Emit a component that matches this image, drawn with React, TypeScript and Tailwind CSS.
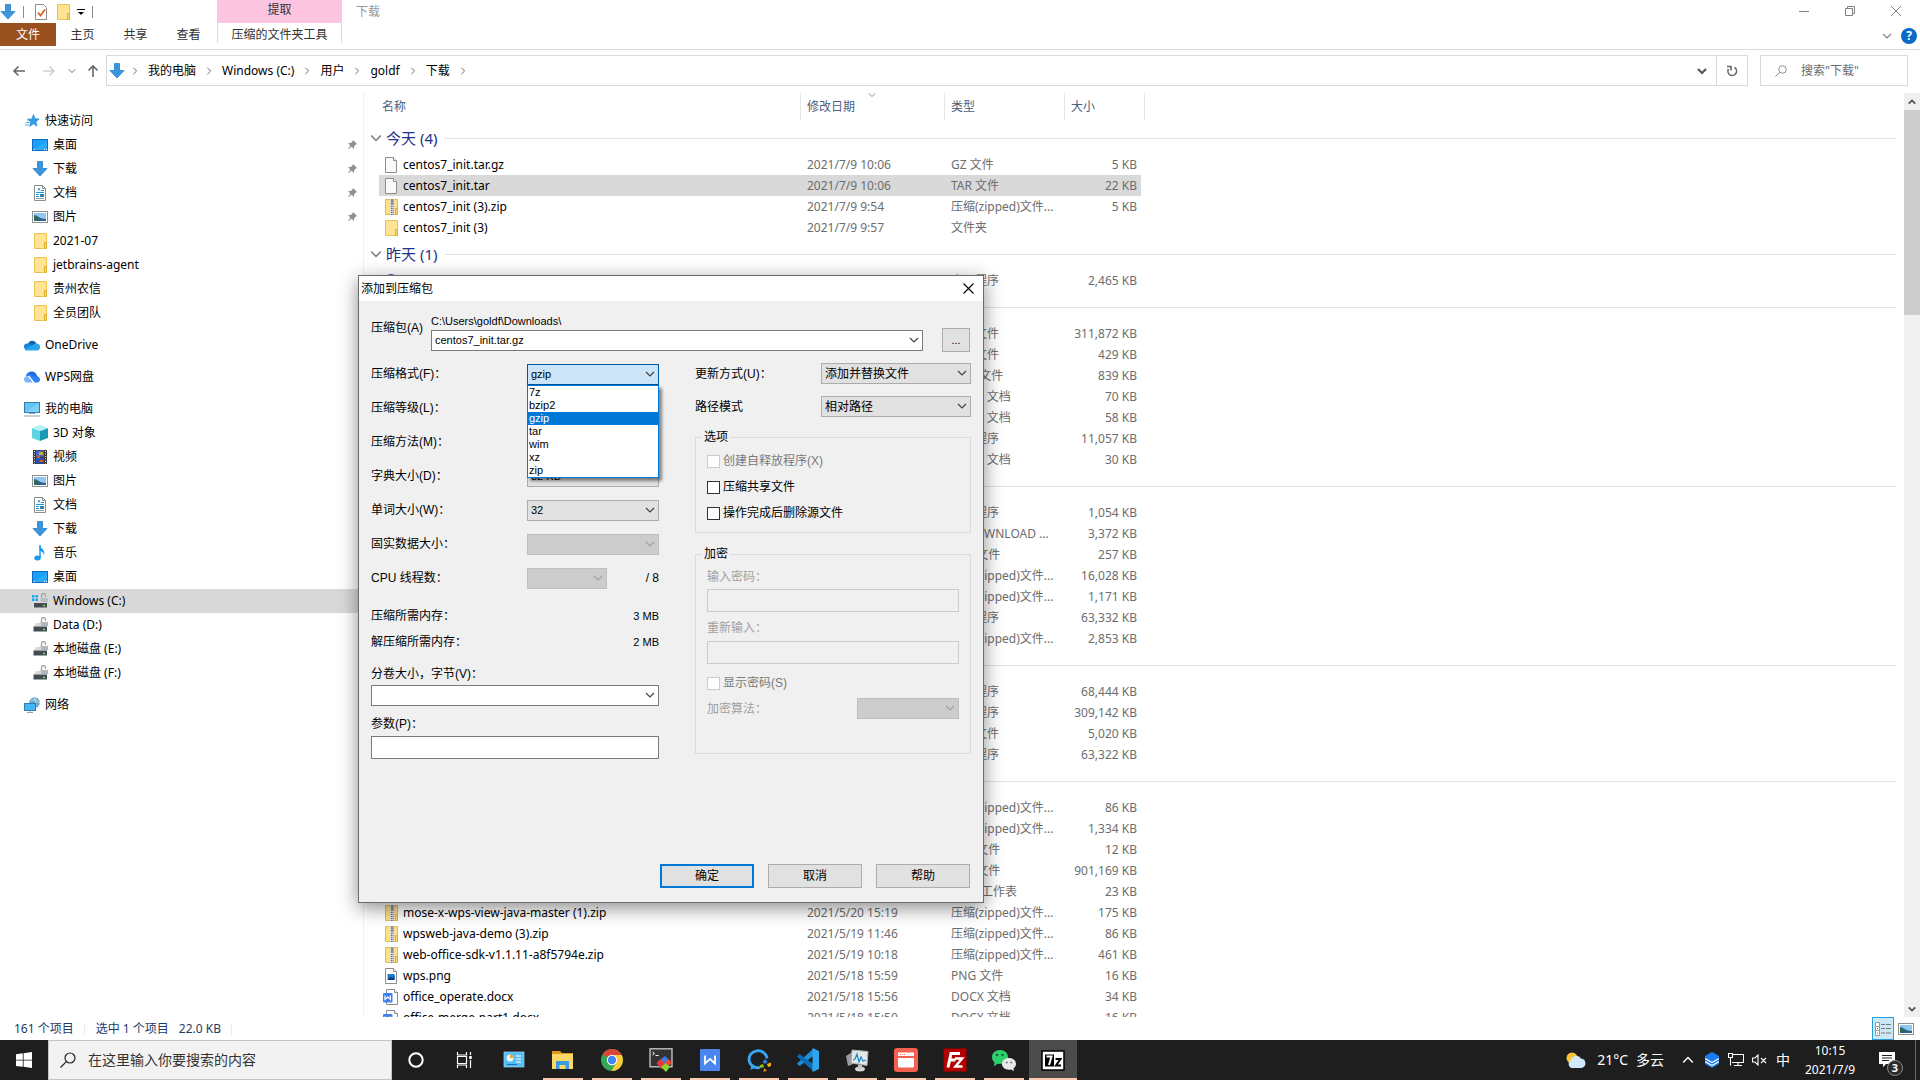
import type { ReactNode } from "react";
import clsx from "clsx";

// ---------- data ----------

type IconName =
  | "star" | "desktop" | "download" | "document" | "picture" | "folder"
  | "onedrive" | "wps" | "computer" | "cube" | "video" | "music"
  | "driveC" | "drive" | "network" | "file" | "zip" | "png" | "docx" | "exe";

type NavItem = { icon: IconName; label: string; pinned?: boolean; active?: boolean };
type NavGroup = { root?: NavItem; items: NavItem[] };

const navGroups: NavGroup[] = [
  {
    root: { icon: "star", label: "快速访问" },
    items: [
      { icon: "desktop", label: "桌面", pinned: true },
      { icon: "download", label: "下载", pinned: true },
      { icon: "document", label: "文档", pinned: true },
      { icon: "picture", label: "图片", pinned: true },
      { icon: "folder", label: "2021-07" },
      { icon: "folder", label: "jetbrains-agent" },
      { icon: "folder", label: "贵州农信" },
      { icon: "folder", label: "全员团队" },
    ],
  },
  { root: { icon: "onedrive", label: "OneDrive" }, items: [] },
  { root: { icon: "wps", label: "WPS网盘" }, items: [] },
  {
    root: { icon: "computer", label: "我的电脑" },
    items: [
      { icon: "cube", label: "3D 对象" },
      { icon: "video", label: "视频" },
      { icon: "picture", label: "图片" },
      { icon: "document", label: "文档" },
      { icon: "download", label: "下载" },
      { icon: "music", label: "音乐" },
      { icon: "desktop", label: "桌面" },
      { icon: "driveC", label: "Windows (C:)", active: true },
      { icon: "drive", label: "Data (D:)" },
      { icon: "drive", label: "本地磁盘 (E:)" },
      { icon: "drive", label: "本地磁盘 (F:)" },
    ],
  },
  { root: { icon: "network", label: "网络" }, items: [] },
];

type FileRow = {
  icon: IconName;
  name: string;
  date: string;
  type: string;
  size: string;
  selected?: boolean;
};

const ZIP = "压缩(zipped)文件...";

const fileGroups: { title: string; rows: FileRow[] }[] = [
  {
    title: "今天 (4)",
    rows: [
      { icon: "file", name: "centos7_init.tar.gz", date: "2021/7/9 10:06", type: "GZ 文件", size: "5 KB" },
      { icon: "file", name: "centos7_init.tar", date: "2021/7/9 10:06", type: "TAR 文件", size: "22 KB", selected: true },
      { icon: "zip", name: "centos7_init (3).zip", date: "2021/7/9 9:54", type: ZIP, size: "5 KB" },
      { icon: "folder", name: "centos7_init (3)", date: "2021/7/9 9:57", type: "文件夹", size: "" },
    ],
  },
  {
    title: "昨天 (1)",
    rows: [{ icon: "exe", name: "commons_from.exe", date: "2021/7/8", type: "应用程序", size: "2,465 KB" }],
  },
  {
    title: "本周 (7)",
    rows: [
      { icon: "file", name: "", date: "", type: "TAR 文件", size: "311,872 KB" },
      { icon: "file", name: "", date: "", type: "TAR 文件", size: "429 KB" },
      { icon: "png", name: "", date: "", type: "PNG 文件", size: "839 KB" },
      { icon: "docx", name: "", date: "", type: "DOCX 文档", size: "70 KB" },
      { icon: "docx", name: "", date: "", type: "DOCX 文档", size: "58 KB" },
      { icon: "exe", name: "", date: "", type: "应用程序", size: "11,057 KB" },
      { icon: "docx", name: "", date: "", type: "DOCX 文档", size: "30 KB" },
    ],
  },
  {
    title: "上周 (7)",
    rows: [
      { icon: "exe", name: "", date: "", type: "应用程序", size: "1,054 KB" },
      { icon: "file", name: "", date: "", type: "CRDOWNLOAD ...", size: "3,372 KB" },
      { icon: "file", name: "", date: "", type: "PDF 文件", size: "257 KB" },
      { icon: "zip", name: "", date: "", type: ZIP, size: "16,028 KB" },
      { icon: "zip", name: "", date: "", type: ZIP, size: "1,171 KB" },
      { icon: "exe", name: "", date: "", type: "应用程序", size: "63,332 KB" },
      { icon: "zip", name: "", date: "", type: ZIP, size: "2,853 KB" },
    ],
  },
  {
    title: "上月 (4)",
    rows: [
      { icon: "exe", name: "", date: "", type: "应用程序", size: "68,444 KB" },
      { icon: "exe", name: "", date: "", type: "应用程序", size: "309,142 KB" },
      { icon: "file", name: "", date: "", type: "TAR 文件", size: "5,020 KB" },
      { icon: "exe", name: "", date: "", type: "应用程序", size: "63,322 KB" },
    ],
  },
  {
    title: "今年早些时候",
    rows: [
      { icon: "zip", name: "", date: "", type: ZIP, size: "86 KB" },
      { icon: "zip", name: "", date: "", type: ZIP, size: "1,334 KB" },
      { icon: "file", name: "", date: "", type: "PDF 文件", size: "12 KB" },
      { icon: "file", name: "", date: "", type: "PDF 文件", size: "901,169 KB" },
      { icon: "file", name: "", date: "", type: "XLSX 工作表", size: "23 KB" },
      { icon: "zip", name: "mose-x-wps-view-java-master (1).zip", date: "2021/5/20 15:19", type: ZIP, size: "175 KB" },
      { icon: "zip", name: "wpsweb-java-demo (3).zip", date: "2021/5/19 11:46", type: ZIP, size: "86 KB" },
      { icon: "zip", name: "web-office-sdk-v1.1.11-a8f5794e.zip", date: "2021/5/19 10:18", type: ZIP, size: "461 KB" },
      { icon: "png", name: "wps.png", date: "2021/5/18 15:59", type: "PNG 文件", size: "16 KB" },
      { icon: "docx", name: "office_operate.docx", date: "2021/5/18 15:56", type: "DOCX 文档", size: "34 KB" },
      { icon: "docx", name: "office-merge-part1.docx", date: "2021/5/18 15:50", type: "DOCX 文档", size: "16 KB" },
    ],
  },
];

const formats = ["7z", "bzip2", "gzip", "tar", "wim", "xz", "zip"];

// ---------- icons ----------

const glyphs: Record<IconName, ReactNode> = {
  star: (
    <>
      <path d="M9.500 1.500l1.500 4.300 4.200.2-3.300 2.800 1.100 4.400-3.500-2.400-3.800 2.600 1.100-4.500L3.500 6.200l4.300-.3z" fill="#2f9fe8" stroke="#1a7fc9" strokeWidth=".6" />
      <path d="M1.500 9.500h4M1 12h4M3 7h2" stroke="#4db0f0" />
    </>
  ),
  desktop: (
    <>
      <rect x=".5" y="2.500" width="15" height="11" fill="#1aa0fb" stroke="#0b6fc0" />
      <path d="M1 13L15 4v9z" fill="#38b0ff" opacity=".6" />
      <path d="M2 12.500h1m9 0h1m1 0h1" stroke="#fff" />
    </>
  ),
  download: <path d="M5.500.5h5v7h4.500L8 15 1 7.500h4.500z" fill="#3a96dd" stroke="#2a7fc6" strokeWidth=".8" />,
  document: (
    <>
      <path d="M2.500.5h8l3 3v12h-11z" fill="#fff" stroke="#8c8c8c" />
      <path d="M10.500.5v3h3" fill="none" stroke="#8c8c8c" />
      <path d="M6 5.500l1-2.500 1 2.500M9 5.500h3M4 7.500h8M4 9.500h3M4 11.500h3" fill="none" stroke="#1d9ad6" />
      <path d="M8 9h4v3H8z" fill="#3c7fa8" />
      <path d="M4 13.500h8" stroke="#9a9a9a" />
    </>
  ),
  picture: (
    <>
      <rect x=".5" y="2.500" width="15" height="11" fill="#fff" stroke="#8f8f8f" />
      <path d="M2 4h12v8H2z" fill="#8fc7f3" />
      <path d="M2 6c3 0 5 3 8 3.500s3 .5 4 .5v2H2z" fill="#31618a" />
      <path d="M2 7c2 .5 4 2.500 6 3.500l-6 .5z" fill="#2f6a4d" />
    </>
  ),
  folder: (
    <>
      <path d="M2.500.5h12v15h-12z" fill="#ffe494" stroke="#e8c252" />
      <path d="M12.500 9.500h2v6h-2z" fill="#ffd768" stroke="#e0b030" />
    </>
  ),
  onedrive: (
    <>
      <path d="M4 7a4.500 4.500 0 018.500-.5L8 11 2 10z" fill="#0f62b8" />
      <path d="M3.500 6.500C6 6 8 8 10 9l-7 4a3.200 3.200 0 01.5-6.500z" fill="#1582dc" />
      <path d="M12.500 6.500a3.500 3.500 0 010 7H3c-1 0-2-.5-2.500-1.300L9 8c1-1 2-1.500 3.500-1.500z" fill="#28a8ea" />
    </>
  ),
  wps: (
    <>
      <path d="M2 7C2.500 3.500 7.500.5 11.500 4L14 8l-4 1-3-2.500z" fill="#1f6fe8" />
      <path d="M0 10c0-2 2-3.500 4-3l5 6.500H3C1 13.500 0 12 0 10z" fill="#7fb4ff" />
      <path d="M5 6.500c2-1 4 0 5.500 1.500 3-1.500 5.500 0 5.500 2.500 0 2-1 3-3 3h-2.500z" fill="#2f80f5" />
      <path d="M4.500 7l5.500 6.500" stroke="#fff" strokeWidth=".8" />
    </>
  ),
  computer: (
    <>
      <rect x=".5" y="1.500" width="15" height="10" fill="#62c3f8" stroke="#3a7ca5" />
      <path d="M1 11L15 2v9z" fill="#8ad6ff" opacity=".7" />
      <path d="M5 12.500h6M0 15h16" stroke="#8ea3b3" />
    </>
  ),
  cube: (
    <>
      <path d="M0 3l8 3v10l-8-3z" fill="#5fd3e0" />
      <path d="M16 3L8 6v10l8-3z" fill="#1899b5" />
      <path d="M0 3l8-3 8 3-8 3z" fill="#b4f0f2" />
    </>
  ),
  video: (
    <>
      <path d="M1 1h14v14H1z" fill="#3d3a3a" />
      <path d="M4 1.500h8v6H4z" fill="#4069c9" />
      <path d="M4 8.500h8v6H4z" fill="#2c51b4" />
      <path d="M7 3h4v3H7z" fill="#c9a93b" />
      <path d="M5 6h3v3H5zM8 11h3v2H8z" fill="#cc5b2e" />
      <path d="M2.500 2v13M13.500 2v13" stroke="#e8e8e8" strokeDasharray="1 1.500" />
    </>
  ),
  music: (
    <>
      <path d="M7.500 0c.5 3 6.500 5 4.500 10.500-.2-2.500-1.500-4-4-4.500z" fill="#0f9bf0" />
      <path d="M8 0v13" stroke="#0f9bf0" strokeWidth="1.500" />
      <ellipse cx="5.500" cy="13" rx="3.200" ry="2.500" fill="#0f9bf0" />
    </>
  ),
  driveC: (
    <>
      <path d="M0 2h2.500v2.500H0zM3.500 2H6v2.500H3.500zM0 5.500h2.500V8H0zM3.500 5.500H6V8H3.500z" fill="#15aaf0" />
      <path d="M9.500 5V2.500a2 2 0 014 0V4" fill="none" stroke="#9fa6ab" strokeWidth="1.300" />
      <path d="M8.500 5H16v4H8.500z" fill="#b9c0c5" />
      <path d="M2 10h13v4.500H2z" fill="#454b50" />
      <path d="M11 12.500h2" stroke="#5ef04e" strokeWidth="1.500" />
    </>
  ),
  drive: (
    <>
      <path d="M9.500 5V2.500a2 2 0 014 0V4" fill="none" stroke="#9fa6ab" strokeWidth="1.300" />
      <path d="M8.500 5H16v4H8.500z" fill="#aeb6bc" />
      <path d="M4 6h5l1 3.500H2z" fill="#d3d7da" />
      <path d="M1.500 9.500H15v5H1.500z" fill="#454b50" />
      <path d="M11 12.500h2" stroke="#5ef04e" strokeWidth="1.500" />
    </>
  ),
  network: (
    <>
      <circle cx="10.500" cy="5.500" r="5.300" fill="#6aa9c9" />
      <path d="M7 3c2 1 3-1 5 0s2 3 3.500 3M10 .5c1 3 3 6 1 10" fill="none" stroke="#c5e4f2" />
      <rect x=".5" y="6.500" width="11" height="7" fill="#46b4f5" stroke="#2c7cb0" />
      <path d="M3 15.500h6M6 13.500v2" stroke="#8ea3b3" />
    </>
  ),
  file: (
    <>
      <path d="M2.500.5h8l3 3v12h-11z" fill="#f9f9f9" stroke="#8c8c8c" />
      <path d="M10.500.5v3h3" fill="#fff" stroke="#8c8c8c" />
    </>
  ),
  zip: (
    <>
      <path d="M2.500.5h12v15h-12z" fill="#ffe27f" stroke="#e3bb45" />
      <path d="M12.500 9.500h2v6h-2z" fill="#ffd768" stroke="#e0b030" />
      <path d="M7 0h4.500v16H7z" fill="#d8d8d8" />
      <path d="M8.500 7v9M10 7v9" stroke="#6c6c6c" strokeDasharray="1 1" />
      <path d="M8 0h2.500v6H8z" fill="#8f8f8f" />
    </>
  ),
  png: (
    <>
      <path d="M2.500.5h8l3 3v12h-11z" fill="#fff" stroke="#8c8c8c" />
      <path d="M10.500.5v3h3" fill="#fff" stroke="#8c8c8c" />
      <path d="M4.500 6h7v6h-7z" fill="#1a7fd0" />
      <path d="M4.500 12l3-3.500 2 1.500 2-3v5z" fill="#0d3e7d" />
    </>
  ),
  docx: (
    <>
      <path d="M3.500.5h8l3 3v12h-11z" fill="#fff" stroke="#8c8c8c" />
      <path d="M11.500.5v3h3" fill="#fff" stroke="#8c8c8c" />
      <rect x="0" y="4" width="9.500" height="9.500" rx="1" fill="#3f7fee" />
      <path d="M2 6.500v4l2.700-2.500 2.700 2.500v-4" fill="none" stroke="#fff" strokeWidth="1.200" />
    </>
  ),
  exe: <circle cx="8" cy="8" r="7" fill="#5b4fb5" />,
};

function Icon({ name, className }: { name: IconName; className?: string }) {
  return (
    <svg viewBox="0 0 16 16" className={clsx("size-4 shrink-0", className)} aria-hidden="true">
      {glyphs[name]}
    </svg>
  );
}

function Chevron({ dir = "down", bold, className }: { dir?: "down" | "right" | "up"; bold?: boolean; className?: string }) {
  const paths = { down: "M1 3l4 4 4-4", right: "M3 1l4 4-4 4", up: "M1 7l4-4 4 4" };
  return (
    <svg viewBox="0 0 10 10" className={clsx("shrink-0", className)} aria-hidden="true">
      <path d={paths[dir]} fill="none" stroke="currentColor" strokeWidth={bold ? 2.2 : 1.2} />
    </svg>
  );
}

function SearchGlyph({ className }: { className?: string }) {
  return (
    <svg viewBox="0 0 16 16" className={clsx("shrink-0", className)} aria-hidden="true">
      <circle cx="10" cy="6" r="5" fill="none" stroke="currentColor" strokeWidth="1.200" />
      <path d="M6.300 9.700L.5 15.500" stroke="currentColor" strokeWidth="1.200" />
    </svg>
  );
}

function Pin() {
  return (
    <svg viewBox="0 0 12 12" className="ml-auto mr-[5px] size-3" aria-hidden="true">
      <path d="M7 1l4 4-1.200.5L8 7.500 8 10 5.500 7.700 1.500 11 4.300 6.500 2 4l2.800-.1L6.700 2z" fill="#87929b" />
    </svg>
  );
}

// ---------- explorer ----------

function Ribbon() {
  return (
    <header className="flex h-[50px] shrink-0 border-b border-[#dadbdc]">
      <div className="w-[217px]">
        <div className="flex h-[23px] items-center">
          <Icon name="download" />
          <span className="ml-[7px] h-3 w-px bg-[#8a8a8a]" />
          <svg viewBox="0 0 16 16" className="ml-[9px] size-4" aria-hidden="true">
            <path d="M2.500.5h8l3 3v12h-11z" fill="#fff" stroke="#8c8c8c" />
            <path d="M5 8.500l2.500 3L12 5.500" fill="none" stroke="#e0602a" strokeWidth="1.800" />
          </svg>
          <Icon name="folder" className="ml-[6px]" />
          <svg viewBox="0 0 8 8" className="ml-[6px] size-2" aria-hidden="true">
            <path d="M0 1.500h8" stroke="#000" />
            <path d="M1 4h6L4 7z" />
          </svg>
          <span className="ml-[7px] h-3 w-px bg-[#8a8a8a]" />
        </div>
        <nav className="flex h-[23px] leading-6 text-[#333]">
          <button className="w-14 bg-[#99511f] text-white">文件</button>
          <button className="w-[53px]">主页</button>
          <button className="w-[53px]">共享</button>
          <button className="w-[53px]">查看</button>
        </nav>
      </div>
      <div className="w-[125px] text-center text-[#333]">
        <div className="h-[23px] bg-[#fdc4df] leading-[19px]">提取</div>
        <button className="h-5 w-full border-x border-[#dadbdc] leading-6">压缩的文件夹工具</button>
      </div>
      <h1 className="ml-[14px] leading-[23px] text-[#999]">下载</h1>
      <div className="ml-auto text-[#808080]">
        <div className="flex h-[21px] items-center pr-px">
          <button aria-label="最小化" className="flex w-[46px] justify-center">
            <svg viewBox="0 0 10 10" className="size-[10px]"><path d="M0 5.500h10" stroke="currentColor" /></svg>
          </button>
          <button aria-label="还原" className="flex w-[46px] justify-center">
            <svg viewBox="0 0 10 10" className="size-[10px]" fill="none" stroke="currentColor">
              <path d="M.5 2.500h7v7h-7zM2.500 2.500v-2h7v7h-2" />
            </svg>
          </button>
          <button aria-label="关闭" className="flex w-[46px] justify-center">
            <svg viewBox="0 0 10 10" className="size-[10px]"><path d="M0 0l10 10M10 0L0 10" stroke="currentColor" /></svg>
          </button>
        </div>
        <div className="flex h-[29px] items-center justify-end gap-[9px] pr-[3px]">
          <Chevron className="size-[10px]" />
          <button aria-label="帮助" className="size-4 rounded-full bg-[#0a6ac8] text-center font-bold leading-4 text-white">?</button>
        </div>
      </div>
    </header>
  );
}

function AddressBar() {
  const crumbs = ["我的电脑", "Windows (C:)", "用户", "goldf", "下载"];
  return (
    <div className="flex h-[43px] shrink-0 items-start pr-3 pt-[5px]">
      <div className="flex h-[31px] w-[106px] items-center pl-3 text-[#666]">
        <button aria-label="后退">
          <svg viewBox="0 0 14 12" className="h-3 w-[14px]" fill="none" stroke="currentColor" strokeWidth="1.600"><path d="M13 6H2M6.500 1.500L2 6l4.500 4.500" /></svg>
        </button>
        <button aria-label="前进" className="ml-4 text-[#d0d0d0]">
          <svg viewBox="0 0 14 12" className="h-3 w-[14px]" fill="none" stroke="currentColor" strokeWidth="1.600"><path d="M1 6h11M7.500 1.500L12 6l-4.500 4.500" /></svg>
        </button>
        <button aria-label="最近位置" className="ml-3"><Chevron className="size-2" /></button>
        <button aria-label="上移" className="ml-[11px]">
          <svg viewBox="0 0 12 14" className="h-[14px] w-3" fill="none" stroke="currentColor" strokeWidth="1.600"><path d="M6 13V2M1.500 6.500L6 2l4.500 4.500" /></svg>
        </button>
      </div>
      <div className="flex h-[31px] flex-1 items-center border border-[#d9d9d9] pl-[2px] text-black">
        <Icon name="download" />
        <Chevron dir="right" className="ml-[6px] size-2 text-[#666]" />
        {crumbs.map((c) => (
          <span key={c} className="flex items-center leading-[27px]">
            <a href="#" className="mx-[9px]">{c}</a>
            <Chevron dir="right" className="size-2 text-[#666]" />
          </span>
        ))}
        <button aria-label="展开" className="ml-auto mr-[9px] text-[#555]"><Chevron bold className="size-[10px]" /></button>
        <button aria-label="刷新" className="flex h-full w-[31px] items-center justify-center border-l border-[#d9d9d9] text-[#666]">
          <svg viewBox="0 0 12 12" className="size-3" fill="none" stroke="currentColor" strokeWidth="1.600"><path d="M8.500 2.500A4.300 4.300 0 112.500 4M1 1.500h4v4" /></svg>
        </button>
      </div>
      <label className="ml-3 flex h-[31px] w-[148px] items-center border border-[#d9d9d9] pl-[14px] text-[#808080]">
        <SearchGlyph className="size-3" />
        <input className="ml-[14px] w-[90px] bg-transparent outline-none placeholder:text-[#6d6d6d]" placeholder={'搜索"下载"'} aria-label="搜索" />
      </label>
    </div>
  );
}

function Sidebar() {
  return (
    <aside className="w-[364px] shrink-0 border-r border-[#f0f0f0] pt-4 text-black">
      {navGroups.map((g, i) => (
        <ul key={i} className="mb-2">
          {g.root && (
            <li className="flex h-6 items-center gap-[5px] pl-6">
              <Icon name={g.root.icon} />
              <a href="#">{g.root.label}</a>
            </li>
          )}
          {g.items.map((item, k) => (
            <li key={k} className={clsx("flex h-6 items-center gap-[5px] pl-8", item.active && "bg-[#d9d9d9]")}>
              <Icon name={item.icon} />
              <a href="#">{item.label}</a>
              {item.pinned && <Pin />}
            </li>
          ))}
        </ul>
      ))}
    </aside>
  );
}

function FileTable() {
  return (
    <div className="min-w-0 flex-1 overflow-hidden">
      <table className="w-full table-fixed border-collapse text-left text-[#6d6d6d]">
        <colgroup>
          <col className="w-[15px]" />
          <col className="w-[422px]" />
          <col className="w-36" />
          <col className="w-[120px]" />
          <col className="w-[76px]" />
          <col />
        </colgroup>
        <thead className="text-[#4c607a]">
          <tr className="h-[29px] align-top">
            <td />
            <th className="p-0 font-normal">
              <div className="h-[27px] border-r border-[#e5e5e5] pl-[3px] leading-7">名称</div>
            </th>
            <th className="relative p-0 font-normal">
              <Chevron className="absolute left-[67px] top-[-2px] size-2 text-[#8a8a8a]" />
              <div className="h-[27px] border-r border-[#e5e5e5] pl-[6px] leading-7">修改日期</div>
            </th>
            <th className="p-0 font-normal">
              <div className="h-[27px] border-r border-[#e5e5e5] pl-[6px] leading-7">类型</div>
            </th>
            <th className="p-0 font-normal">
              <div className="h-[27px] pl-[6px] leading-7">大小</div>
            </th>
            <td className="p-0 pl-[3px]">
              <div className="h-[27px] border-l border-[#e5e5e5]" />
            </td>
          </tr>
        </thead>
        {fileGroups.map((g) => (
          <tbody key={g.title}>
            <tr>
              <th colSpan={6} className="p-0 font-normal">
                <div className="flex h-8 items-center pl-[6px] pr-2 text-[15px] text-[#1e3287]">
                  <Chevron className="size-3 text-[#777]" />
                  <span className="ml-1 leading-5">{g.title}</span>
                  <span className="ml-2 mt-px h-px flex-1 bg-[#e2e2e2]" />
                </div>
              </th>
            </tr>
            {g.rows.map((r, i) => {
              const cell = clsx("h-[21px] p-0 whitespace-nowrap leading-[21px]", r.selected && "bg-[#d9d9d9]");
              return (
                <tr key={i}>
                  <td />
                  <td className={cell}>
                    <div className="flex h-[21px] items-center gap-1 pl-1 text-black">
                      <Icon name={r.icon} />
                      {r.name}
                    </div>
                  </td>
                  <td className={cell}><div className="pl-[6px]">{r.date}</div></td>
                  <td className={cell}><div className="pl-[6px]">{r.type}</div></td>
                  <td className={cell}><div className="pr-1 text-right">{r.size}</div></td>
                  <td />
                </tr>
              );
            })}
          </tbody>
        ))}
      </table>
    </div>
  );
}

function ScrollBar() {
  return (
    <div className="flex w-4 shrink-0 flex-col bg-[#f0f0f0] text-[#505050]">
      <button aria-label="向上滚动" className="flex h-[17px] items-center justify-center"><Chevron dir="up" bold className="size-2" /></button>
      <div className="h-[205px] bg-[#cdcdcd]" />
      <button aria-label="向下滚动" className="mt-auto flex h-[17px] items-center justify-center"><Chevron bold className="size-2" /></button>
    </div>
  );
}

function StatusBar() {
  return (
    <footer className="flex h-[23px] shrink-0 items-center pl-[14px] pr-[6px] text-[#1e3a66]">
      <span>161 个项目</span>
      <span className="ml-[10px] h-3 w-px bg-[#ececec]" />
      <span className="ml-[11px]">选中 1 个项目</span>
      <span className="ml-[10px]">22.0 KB</span>
      <span className="ml-[10px] h-3 w-px bg-[#ececec]" />
      <button aria-label="详细信息" className="ml-auto flex h-[23px] w-[22px] items-center justify-center border border-[#26a0da] bg-[#cce8f6]">
        <svg viewBox="0 0 16 14" className="h-[14px] w-4" fill="none" stroke="#777">
          <path d="M.5.500h4v4h-4zM.5 4.500h4v4h-4zM.5 8.500h4v5h-4z" fill="#fff" stroke="#999" />
          <path d="M6 2.500h4m1 0h5M6 6.500h4m1 0h5M6 11h4m1 0h5" />
          <path d="M2 11h1" stroke="#d33" />
          <path d="M2 6.500h1" stroke="#36c" />
        </svg>
      </button>
      <button aria-label="大图标" className="ml-1"><Icon name="picture" /></button>
    </footer>
  );
}

// ---------- archive dialog ----------

function Select({ id, value, className, tone = "gray", disabled }: {
  id: string;
  value?: string;
  className?: string;
  tone?: "gray" | "white" | "blue";
  disabled?: boolean;
}) {
  return (
    <div className={clsx("relative h-[21px] shrink-0", className)}>
      <select
        id={id}
        disabled={disabled}
        className={clsx(
          "block h-full w-full appearance-none rounded-none border pl-[3px] text-black opacity-100 outline-none",
          disabled && "border-[#bfbfbf] bg-[#cccccc]",
          !disabled && tone === "gray" && "border-[#acacac] bg-[#e1e1e1]",
          !disabled && tone === "white" && "border-[#7a7a7a] bg-white",
          !disabled && tone === "blue" && "border-[#00579c] bg-[#cce4f7]"
        )}
      >
        <option>{value ?? ""}</option>
      </select>
      <Chevron className={clsx("pointer-events-none absolute right-1 top-[5px] size-[10px]", disabled ? "text-[#a0a0a0]" : "text-[#444]")} />
    </div>
  );
}

function Field({ id, label, children }: { id: string; label: string; children: ReactNode }) {
  return (
    <div className="flex h-[34px] items-center">
      <label htmlFor={id} className="w-[156px]">{label}</label>
      {children}
    </div>
  );
}

function Check({ id, label, disabled }: { id: string; label: string; disabled?: boolean }) {
  return (
    <div className={clsx("flex h-[26px] items-center gap-[3px]", disabled && "text-[#7a7a7a]")}>
      <input
        id={id}
        type="checkbox"
        disabled={disabled}
        className={clsx("size-[13px] appearance-none border bg-white", disabled ? "border-[#cccccc]" : "border-[#333]")}
      />
      <label htmlFor={id}>{label}</label>
    </div>
  );
}

function DialogButton({ children, primary }: { children: ReactNode; primary?: boolean }) {
  return (
    <button className={clsx("h-6 w-[94px] bg-[#e1e1e1]", primary ? "border-2 border-[#0078d7]" : "border border-[#adadad]")}>
      {children}
    </button>
  );
}

function ArchiveDialog() {
  return (
    <div
      role="dialog"
      aria-label="添加到压缩包"
      className="absolute left-[358px] top-[275px] flex h-[628px] w-[626px] flex-col border border-[#6b6b6b] bg-[#f0f0f0] font-['Liberation_Sans','Noto_Sans_CJK_SC',sans-serif] text-black shadow-[0_5px_18px_rgba(0,0,0,0.45)]"
    >
      <div className="flex h-[25px] items-center bg-white pl-[2px] pr-[9px]">
        <h2>添加到压缩包</h2>
        <button aria-label="关闭" className="ml-auto">
          <svg viewBox="0 0 11 11" className="size-[11px]"><path d="M.5.500l10 10M10.500.5l-10 10" stroke="#000" strokeWidth="1.100" /></svg>
        </button>
      </div>

      <div className="flex flex-1 flex-col px-3 pb-[14px] pt-[13px]">
        <div className="flex">
          <label htmlFor="archive" className="mt-[5px] w-[60px] leading-[18px]">压缩包(A)</label>
          <div className="w-[492px] text-[11px]">
            <p className="h-4 leading-[14px]">C:\Users\goldf\Downloads\</p>
            <Select id="archive" value="centos7_init.tar.gz" tone="white" />
          </div>
          <button className="ml-auto mr-px mt-[14px] h-6 w-7 border border-[#adadad] bg-[#e1e1e1] text-[11px]">...</button>
        </div>

        <div className="mt-[5px] flex gap-9">
          <div className="w-72">
            <div className="relative">
              <Field id="format" label="压缩格式(F)：">
                <Select id="format" value="gzip" tone="blue" className="w-[132px] text-[11px]" />
              </Field>
              <ul role="listbox" className="absolute left-[156px] top-7 z-10 w-[132px] border border-[#0078d7] bg-white text-[11px] leading-[13px] shadow-[3px_3px_3px_rgba(0,0,0,0.45)]">
                {formats.map((f) => (
                  <li key={f} role="option" aria-selected={f === "gzip"} className={clsx("h-[13px] pl-px", f === "gzip" && "bg-[#0078d7] text-white")}>
                    {f}
                  </li>
                ))}
              </ul>
            </div>
            <Field id="level" label="压缩等级(L)："><Select id="level" className="w-[132px]" /></Field>
            <Field id="method" label="压缩方法(M)："><Select id="method" className="w-[132px]" /></Field>
            <Field id="dict" label="字典大小(D)："><Select id="dict" value="32 KB" className="w-[132px] text-[11px]" /></Field>
            <Field id="word" label="单词大小(W)："><Select id="word" value="32" className="w-[132px] text-[11px]" /></Field>
            <Field id="solid" label="固实数据大小："><Select id="solid" disabled className="w-[132px]" /></Field>
            <Field id="cpu" label="CPU 线程数：">
              <Select id="cpu" disabled className="w-20" />
              <span className="ml-auto">/ 8</span>
            </Field>

            <div className="mt-2 leading-[26px]">
              <p className="flex justify-between"><span>压缩所需内存：</span><span className="text-[11px]">3 MB</span></p>
              <p className="flex justify-between"><span>解压缩所需内存：</span><span className="text-[11px]">2 MB</span></p>
            </div>
            <label htmlFor="volume" className="mt-2 block leading-[22px]">分卷大小，字节(V)：</label>
            <Select id="volume" tone="white" />
            <label htmlFor="params" className="mt-[6px] block leading-6">参数(P)：</label>
            <input id="params" className="block h-[23px] w-full border border-[#7a7a7a] bg-white" />
          </div>

          <div className="w-[276px]">
            <div className="flex h-[33px] items-center justify-between">
              <label htmlFor="update">更新方式(U)：</label>
              <Select id="update" value="添加并替换文件" className="w-[150px]" />
            </div>
            <div className="flex h-[33px] items-center justify-between">
              <label htmlFor="path">路径模式</label>
              <Select id="path" value="相对路径" className="w-[150px]" />
            </div>

            <fieldset className="mt-[6px] border border-[#dcdcdc] px-[11px] pb-[6px]">
              <legend className="-ml-[5px] px-[2px] leading-4">选项</legend>
              <div className="pt-[3px]">
                <Check id="sfx" label="创建自释放程序(X)" disabled />
                <Check id="shared" label="压缩共享文件" />
                <Check id="delete" label="操作完成后删除源文件" />
              </div>
            </fieldset>

            <fieldset className="mt-[13px] border border-[#dcdcdc] px-[11px] pb-[34px] text-[#a0a0a0]">
              <legend className="-ml-[5px] px-[2px] leading-4 text-black">加密</legend>
              <label htmlFor="pwd" className="mt-1 block leading-[23px]">输入密码：</label>
              <input id="pwd" type="password" disabled className="block h-[23px] w-full border border-[#cccccc] bg-[#f0f0f0]" />
              <label htmlFor="pwd2" className="mt-1 block leading-[25px]">重新输入：</label>
              <input id="pwd2" type="password" disabled className="block h-[23px] w-full border border-[#cccccc] bg-[#f0f0f0]" />
              <div className="mb-[2px] mt-[6px]">
                <Check id="show" label="显示密码(S)" disabled />
              </div>
              <div className="flex items-center justify-between">
                <label htmlFor="algo">加密算法：</label>
                <Select id="algo" disabled className="w-[102px]" />
              </div>
            </fieldset>
          </div>
        </div>

        <div className="mr-px mt-auto flex justify-end gap-[14px]">
          <DialogButton primary>确定</DialogButton>
          <DialogButton>取消</DialogButton>
          <DialogButton>帮助</DialogButton>
        </div>
      </div>
    </div>
  );
}

// ---------- taskbar ----------

const apps: { name: string; icon: ReactNode; running?: boolean; active?: boolean }[] = [
  {
    name: "Cortana",
    icon: <circle cx="12" cy="12" r="6.700" fill="none" stroke="#fff" strokeWidth="2" />,
  },
  {
    name: "任务视图",
    icon: (
      <g fill="none" stroke="#fff" strokeWidth="1.200">
        <path d="M4.500 4v3h9V4M4.500 20v-3h9v3M4.500 8.500h9v7h-9zM17.500 4v3M17.500 12v8" />
        <path d="M17.500 8v3" strokeWidth="2.500" />
      </g>
    ),
  },
  {
    name: "控制面板",
    icon: (
      <>
        <rect x="2" y="4" width="20" height="15" fill="#57bdf5" stroke="#8ed8ff" strokeWidth=".7" />
        <circle cx="8" cy="10" r="3.500" fill="#e8f6ff" />
        <path d="M8 10V6.500a3.500 3.500 0 013.500 3.500z" fill="#f0a52c" />
        <path d="M14 8h5M14 11h5M14 14h5" stroke="#fff" />
        <path d="M5 16.500h10" stroke="#1a6fb0" />
      </>
    ),
  },
  {
    name: "文件资源管理器",
    running: true,
    icon: (
      <>
        <path d="M1 3h8l2 2h11v4H1z" fill="#d99a16" />
        <path d="M1 6h21v15H1z" fill="#fbd668" />
        <path d="M5 21v-8h13v8h-3.500v-4h-6v4z" fill="#3c9be0" />
      </>
    ),
  },
  {
    name: "Chrome",
    running: true,
    icon: (
      <>
        <circle cx="12" cy="12" r="11" fill="#35a853" />
        <path d="M12 12L2.500 6.500A11 11 0 0121.500 6.500z" fill="#dd4437" />
        <path d="M12 7h9.700A11 11 0 0111.500 23l4.800-8.500z" fill="#fcc934" />
        <circle cx="12" cy="12" r="5.200" fill="#fff" />
        <circle cx="12" cy="12" r="4.200" fill="#4285f4" />
      </>
    ),
  },
  {
    name: "MobaXterm",
    running: true,
    icon: (
      <>
        <rect x="1" y="0.800" width="22" height="18" fill="#333" stroke="#ccc" strokeWidth="1.300" />
        <path d="M3.500 4l2 1.500-2 1.500M6.500 7.500h3" fill="none" stroke="#fff" />
        <path d="M7.500 15l4-4 3 2 2 3-4 5z" fill="#e83a3a" />
        <path d="M12 11l4-3 4 4-4 4z" fill="#3e7be8" />
        <path d="M19 11l4 3-3 4-4-3z" fill="#f0472e" />
        <path d="M12 19l5-4 4 4-4 5z" fill="#89d52c" />
      </>
    ),
  },
  {
    name: "WPS",
    running: true,
    icon: (
      <>
        <rect x="2" y="1" width="20" height="22" rx="1" fill="#4a86ee" />
        <path d="M7 7.500v8l5-4.500 5 4.500v-8" fill="none" stroke="#fff" strokeWidth="1.800" />
      </>
    ),
  },
  {
    name: "企业微信",
    running: true,
    icon: (
      <>
        <path d="M13 19.500a9 8.500 0 117-9" fill="none" stroke="#38a5f5" strokeWidth="2.800" />
        <path d="M4.500 17l-1 5 5.500-2.500" fill="#38a5f5" />
        <path d="M18 11l2.500 3-2.500 2-2.500-2z" fill="#2f80ed" />
        <path d="M20 16l4-1.500v3.500l-3 1z" fill="#f6b21b" />
        <path d="M17 20l3 2.500-3.500 1.500z" fill="#f0822e" />
        <path d="M12.500 17.500l3.500-1.500 1 3-3.500 1z" fill="#8ac926" />
      </>
    ),
  },
  {
    name: "VS Code",
    running: true,
    icon: (
      <>
        <path d="M17 1L1 15.500 3.500 18 18 7.500z" fill="#1f8ed6" />
        <path d="M17 23L1 8.500 3.500 6 18 16.500z" fill="#0a6cb5" />
        <path d="M16.500 0l6.500 3v18l-6.500 3z" fill="#2fa4ee" />
      </>
    ),
  },
  {
    name: "性能监视器",
    running: true,
    icon: (
      <>
        <path d="M1 8l8-5 2 12-8 3z" fill="#9a9a9a" />
        <path d="M7 2l16 1.500-1 14L6 15z" fill="#e4e7ea" stroke="#aaa" />
        <path d="M8 12l2-1 2-5 2 8 2-5 2 4 3-1" fill="none" stroke="#1f86c8" strokeWidth="1.200" />
        <ellipse cx="15" cy="21" rx="5" ry="2.500" fill="#d6d6d6" />
        <path d="M13 17h4v4h-4z" fill="#c4c4c4" />
      </>
    ),
  },
  {
    name: "窗口工具",
    running: true,
    icon: (
      <>
        <rect width="24" height="24" rx="3" fill="#f4604f" />
        <path d="M4 4.500h16V8H4z" fill="#fff" />
        <path d="M4 10h16v8a1.500 1.500 0 01-1.500 1.500h-13A1.500 1.500 0 014 18z" fill="#fff" />
        <path d="M6 6.500h5" stroke="#f4604f" strokeDasharray="1 1" />
      </>
    ),
  },
  {
    name: "FileZilla",
    running: true,
    icon: (
      <>
        <rect x="0.500" y="0.500" width="23" height="23" fill="#b30000" stroke="#7d0000" strokeDasharray="1 1" />
        <path d="M5 19.500L8 5.500h9M6.500 12h6" fill="none" stroke="#fff" strokeWidth="3" />
        <path d="M12 10.500h7L12.500 18.500h7" fill="none" stroke="#fff" strokeWidth="2.500" />
      </>
    ),
  },
  {
    name: "微信",
    running: true,
    icon: (
      <>
        <path d="M8 2c4.500 0 8 3 8 7s-3.500 7-8 7l-2.500-.3L2 18.500l.5-4C1 13 0 11.500 0 9c0-4 3.500-7 8-7z" fill="#2fcf6e" />
        <circle cx="5" cy="7" r="1.200" fill="#145c30" />
        <circle cx="10.500" cy="7" r="1.200" fill="#145c30" />
        <path d="M17 10c4 0 7 2.500 7 6 0 2-1 3.300-2.500 4.300l.5 2.700-3-1.500-2 .2c-4 0-7-2.400-7-5.700s3-6 7-6z" fill="#e9e9e9" />
        <circle cx="14.700" cy="14.500" r="1" fill="#777" />
        <circle cx="19.200" cy="14.500" r="1" fill="#777" />
      </>
    ),
  },
  {
    name: "7-Zip",
    running: true,
    active: true,
    icon: (
      <>
        <rect x="1" y="3" width="22" height="19" fill="#fff" stroke="#000" strokeWidth="1.500" />
        <path d="M4 6.500h9v12H4z" />
        <path d="M5.500 8.500H10.500L8 17" fill="none" stroke="#fff" strokeWidth="2" />
        <path d="M14.500 11h5L15 17.500h5" fill="none" stroke="#000" strokeWidth="2" />
      </>
    ),
  },
];

function Taskbar() {
  return (
    <div className="flex h-10 shrink-0 bg-[#1e1e1e] text-white">
      <button aria-label="开始" className="flex w-12 items-center justify-center">
        <svg viewBox="0 0 16 16" className="size-4" fill="#fff">
          <path d="M0 2.200l6.800-.9v6.400H0zM7.600 1.200L16 0v7.700H7.600zM0 8.500h6.800v6.300L0 13.900zM7.600 8.500H16V16l-8.400-1.200z" />
        </svg>
      </button>
      <label className="flex w-[344px] items-center border border-[#c4c4c4] bg-[#f2f2f2] pl-[11px] text-[#222]">
        <SearchGlyph className="size-4" />
        <input className="ml-3 w-[280px] bg-transparent text-sm outline-none placeholder:text-[#333]" placeholder="在这里输入你要搜索的内容" aria-label="任务栏搜索" />
      </label>
      <div className="flex gap-px">
        {apps.map((a) => (
          <button key={a.name} aria-label={a.name} className={clsx("flex w-12 flex-col items-center", a.active && "bg-[#4b4b4b]")}>
            <svg viewBox="0 0 24 24" className="mt-2 size-6">{a.icon}</svg>
            {a.running && <span className={clsx("mt-[6px] h-[2px] bg-[#fdc9ac]", a.active ? "w-12" : "w-10")} />}
          </button>
        ))}
      </div>

      <div className="ml-auto flex items-center">
        <svg viewBox="0 0 20 16" className="h-4 w-5" aria-hidden="true">
          <circle cx="6" cy="6" r="5.500" fill="#f9c23c" />
          <path d="M5 16a4.500 4.500 0 010-8 5.500 5.500 0 0110-1.500A4.800 4.800 0 0115.500 16z" fill="#cfe8fb" />
        </svg>
        <span className="ml-[11px] text-sm">21°C</span>
        <span className="ml-2 text-sm">多云</span>
        <Chevron dir="up" className="ml-[18px] size-3" />
        <svg viewBox="0 0 14 16" className="ml-[11px] h-4 w-[14px]" aria-hidden="true">
          <path d="M7 0l7 4v8l-7 4-7-4V4z" fill="#1b7cf2" />
          <path d="M0 6.500l7 4 7-4M0 9.500l7 4 7-4" fill="none" stroke="#fff" strokeWidth="1.100" />
        </svg>
        <svg viewBox="0 0 16 14" className="ml-[9px] h-[14px] w-4" fill="none" stroke="#fff" strokeWidth="1.100" aria-hidden="true">
          <path d="M5 1.500h10.500v8H4M.5.500h4v4h-4zM2.500 4.500v8M6 12.500h8M10 9.500v3" />
        </svg>
        <svg viewBox="0 0 15 12" className="ml-2 h-3 w-[15px]" fill="none" stroke="#fff" strokeWidth="1.100" aria-hidden="true">
          <path d="M.5 4v4h2.500L6 11V1L3 4zM9 4l5 5M14 4L9 9" />
        </svg>
        <span className="ml-[9px] text-sm">中</span>
        <div className="ml-[7px] w-[66px] text-center leading-[19px]">
          <p>10:15</p>
          <p>2021/7/9</p>
        </div>
        <button aria-label="通知" className="relative ml-4 size-4">
          <svg viewBox="0 0 16 16" className="size-4"><path d="M0 0h16v12H7l-3 3v-3H0z" fill="#fff" /><path d="M3 3.500h10M3 6h10M3 8.500h7" stroke="#1e1e1e" /></svg>
          <span className="absolute left-2 top-2 size-4 rounded-full border border-[#8a8a8a] bg-[#2b2b2b] text-center text-[11px] font-bold leading-[14px]">3</span>
        </button>
        <span className="ml-5 mr-1 h-10 w-px bg-[#6a6a6a]" />
      </div>
    </div>
  );
}

export default function App() {
  return (
    <div className="relative flex h-screen flex-col overflow-hidden bg-white font-['Noto_Sans','Noto_Sans_CJK_SC',sans-serif] text-xs" lang="zh-CN">
      <Ribbon />
      <AddressBar />
      <main className="flex min-h-0 flex-1">
        <Sidebar />
        <FileTable />
        <ScrollBar />
      </main>
      <StatusBar />
      <Taskbar />
      <ArchiveDialog />
    </div>
  );
}
